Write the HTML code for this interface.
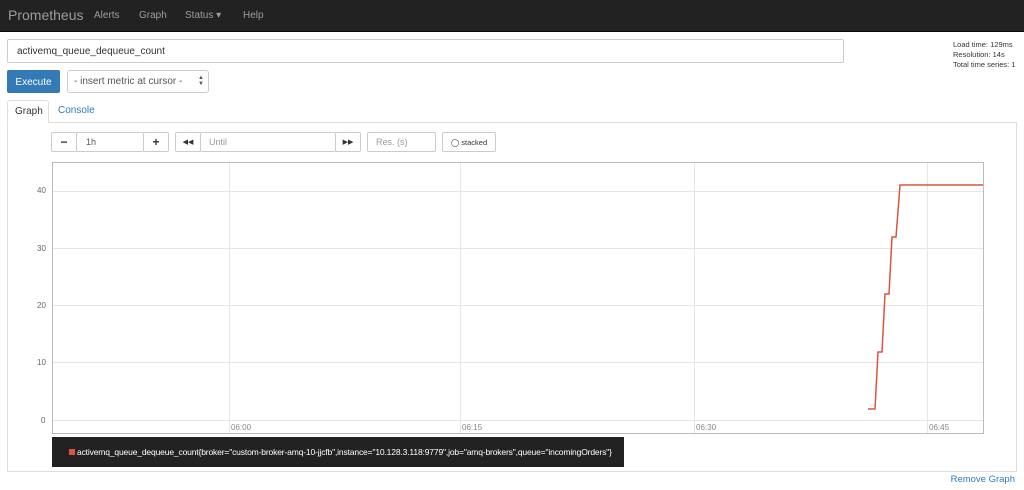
<!DOCTYPE html>
<html><head><style>
*{box-sizing:border-box;margin:0;padding:0}
body{width:1024px;height:490px;background:#fff;font-family:"Liberation Sans",sans-serif;position:relative;overflow:hidden;color:#333}
.a{position:absolute}
.nav{left:0;top:0;width:1024px;height:32px;background:#222;border-bottom:1px solid #080808}
.nav span{position:absolute;top:10px;font-size:10px;color:#9d9d9d}
.btn{position:absolute;border:1px solid #ccc;background:#fff;font-size:9px;color:#555;display:flex;align-items:center;justify-content:center;border-radius:2px}
.lbl{position:absolute;font-size:8px;color:#666}
</style></head><body>
<div class="a nav">
<span style="left:8px;top:7px;font-size:14px;color:#9d9d9d">Prometheus</span>
<span style="left:94px">Alerts</span><span style="left:139px">Graph</span><span style="left:185px">Status ▾</span><span style="left:243px">Help</span>
</div>
<div class="a" style="left:7px;top:39px;width:837px;height:24px;border:1px solid #ccc;border-radius:2px;font-size:10px;padding:6px 9px;color:#333">activemq_queue_dequeue_count</div>
<div class="a" style="left:953px;top:40px;font-size:7.5px;line-height:10px;color:#333">Load time: 129ms<br>Resolution: 14s<br>Total time series: 1</div>
<div class="a" style="left:7px;top:70px;width:53px;height:23px;background:#337ab7;border-radius:2px;color:#fff;font-size:10px;display:flex;align-items:center;justify-content:center;padding-top:1px">Execute</div>
<div class="a" style="left:67px;top:70px;width:142px;height:23px;border:1px solid #ccc;border-radius:3px;font-size:10px;padding:5px 6px;color:#555">- insert metric at cursor -<span style="position:absolute;right:4px;top:4px;font-size:6px;line-height:6px">▲<br>▼</span></div>
<div class="a" style="left:7px;top:122px;width:1010px;height:350px;border:1px solid #ddd"></div>
<div class="a" style="left:7px;top:100px;width:42px;height:23px;border:1px solid #ddd;border-bottom:1px solid #fff;background:#fff;font-size:10px;padding:5px 7px;border-radius:3px 3px 0 0">Graph</div>
<div class="a" style="left:58px;top:105px;font-size:10px;color:#337ab7">Console</div>
<div class="btn" style="left:51px;top:132px;width:26px;height:20px;font-size:12px;color:#333;font-weight:bold">−</div>
<div class="btn" style="left:76px;top:132px;width:68px;height:20px;justify-content:flex-start;padding-left:9px">1h</div>
<div class="btn" style="left:143px;top:132px;width:26px;height:20px;font-size:12px;color:#333;font-weight:bold">+</div>
<div class="btn" style="left:175px;top:132px;width:26px;height:20px;color:#333;font-size:7px">◀◀</div>
<div class="btn" style="left:200px;top:132px;width:136px;height:20px;justify-content:flex-start;padding-left:8px;color:#999">Until</div>
<div class="btn" style="left:335px;top:132px;width:26px;height:20px;color:#333;font-size:7px">▶▶</div>
<div class="btn" style="left:367px;top:132px;width:69px;height:20px;justify-content:flex-start;padding-left:8px;color:#999">Res. (s)</div>
<div class="btn" style="left:442px;top:132px;width:54px;height:20px;font-size:7.5px;color:#333">◯ stacked</div>
<svg class="a" style="left:0;top:0" width="1024" height="490">
<g stroke="#e6e6e6" stroke-width="1">
<line x1="52" y1="191.5" x2="984" y2="191.5"/><line x1="52" y1="248.5" x2="984" y2="248.5"/><line x1="52" y1="305.5" x2="984" y2="305.5"/><line x1="52" y1="362.5" x2="984" y2="362.5"/><line x1="52" y1="420.5" x2="984" y2="420.5"/>
<line x1="229.5" y1="162" x2="229.5" y2="433"/><line x1="460.5" y1="162" x2="460.5" y2="433"/><line x1="694.5" y1="162" x2="694.5" y2="433"/><line x1="927.5" y1="162" x2="927.5" y2="433"/>
</g>
<rect x="52.5" y="162.5" width="931" height="271" fill="none" stroke="#bbb"/>
<polyline fill="none" stroke="#d9553f" stroke-width="1.5" points="868,409 875,409 878,352 882,352 885,294 889,294 892,237 896,237 900,185 983,185"/>
</svg>
<div class="lbl" style="left:37px;top:186px">40</div><div class="lbl" style="left:37px;top:244px">30</div><div class="lbl" style="left:37px;top:301px">20</div><div class="lbl" style="left:37px;top:358px">10</div><div class="lbl" style="left:41px;top:416px">0</div>
<div class="lbl" style="left:231px;top:423px;color:#888">06:00</div><div class="lbl" style="left:462px;top:423px;color:#888">06:15</div><div class="lbl" style="left:696px;top:423px;color:#888">06:30</div><div class="lbl" style="left:929px;top:423px;color:#888">06:45</div>
<div class="a" style="left:52px;top:437px;width:572px;height:30px;background:#222;color:#fff;font-size:8.5px;padding:10px 0 0 17px;white-space:nowrap;letter-spacing:-0.15px"><span style="display:inline-block;width:6px;height:6px;background:#d9553f;margin-right:2px"></span>activemq_queue_dequeue_count{broker="custom-broker-amq-10-jjcfb",instance="10.128.3.118:9779",job="amq-brokers",queue="incomingOrders"}</div>
<div class="a" style="right:9px;top:474px;font-size:9.5px;color:#337ab7">Remove Graph</div>
</body></html>
